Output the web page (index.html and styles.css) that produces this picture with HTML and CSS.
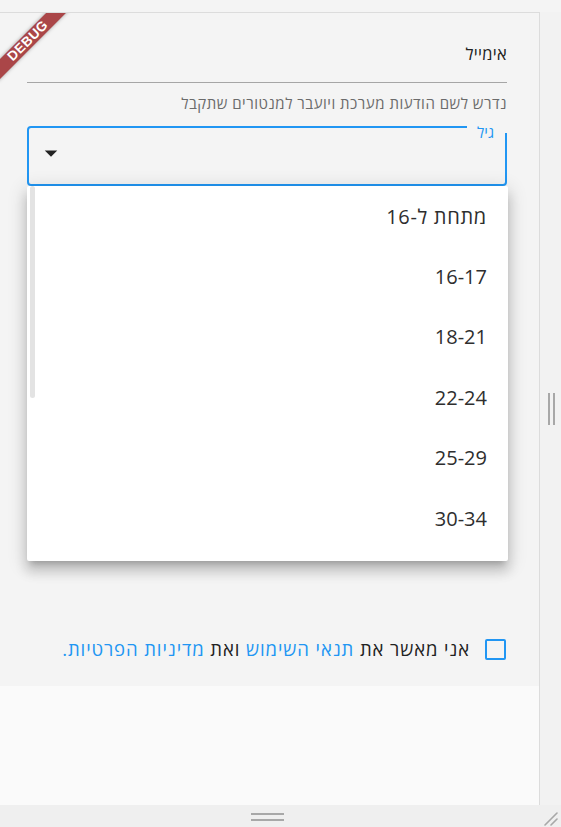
FILE: index.html
```html
<!DOCTYPE html>
<html lang="he" dir="rtl">
<head>
<meta charset="utf-8">
<title>הרשמה</title>
<link rel="stylesheet" href="styles.css">
</head>
<body>
<div class="screen">
  <div class="topbar"></div>
  <div class="main">
    <div class="panel">
      <div class="form">
        <div class="email-field">
          <div class="email-label">אימייל</div>
        </div>
        <div class="helper">נדרש לשם הודעות מערכת ויועבר למנטורים שתקבל</div>
        <div class="age-field">
          <span class="notch"></span>
          <span class="age-label">גיל</span>
          <svg class="arrow" width="30" height="30" viewBox="0 0 24 24"><path d="M7 10l5 5 5-5z" fill="#222"/></svg>
        </div>
        <div class="spacer"></div>
        <div class="consent">
          <span class="checkbox"></span>
          <span class="consent-text">אני מאשר את <span class="link">תנאי השימוש</span> ואת <span class="link">מדיניות הפרטיות.</span></span>
        </div>
      </div>
      <div class="lower"></div>

      <div class="menu">
        <div class="menu-scrollbar"></div>
        <div class="menu-item he">מתחת ל-16</div>
        <div class="menu-item">16-17</div>
        <div class="menu-item">18-21</div>
        <div class="menu-item">22-24</div>
        <div class="menu-item">25-29</div>
        <div class="menu-item">30-34</div>
      </div>

      <div class="banner-clip">
        <div class="banner">DEBUG</div>
      </div>
    </div>
    <div class="gutter">
      <div class="vhandle"></div>
    </div>
  </div>
  <div class="bottombar">
    <div class="hhandle-cell"><div class="hhandle"></div></div>
    <div class="corner">
      <svg width="16" height="16" viewBox="0 0 16 16"><path d="M15 3 L3 15 M15 9 L9 15" stroke="#a8a8a8" stroke-width="1.6" stroke-linecap="round" fill="none"/></svg>
    </div>
  </div>
</div>
</body>
</html>
```

FILE: styles.css
```css
* { box-sizing: border-box; }
html, body { margin: 0; padding: 0; }
body {
  background: #f1f1f1;
  font-family: "Open Sans", "Liberation Sans", "DejaVu Sans", sans-serif;
  color: #212121;
}
.screen {
  width: 561px;
  height: 827px;
  display: flex;
  flex-direction: column;
  overflow: hidden;
}
.topbar {
  height: 12px;
  background: #f4f4f4;
  flex: none;
}
.main {
  flex: 1;
  display: flex;
  direction: ltr;
  min-height: 0;
}
.panel {
  position: relative;
  width: 540px;
  flex: none;
  border-top: 1px solid #dcdcdc;
  border-right: 1px solid #dcdcdc;
  display: flex;
  flex-direction: column;
  direction: rtl;
}
.form {
  background: #f4f4f4;
  height: 673px;
  padding: 0 32px 0 27px;
  display: flex;
  flex-direction: column;
}
.lower {
  flex: 1;
  background: #fafafa;
}
.email-field {
  padding-top: 31px;
  padding-bottom: 18px;
  border-bottom: 1px solid #a6a6a6;
}
.email-label {
  font-size: 16.5px;
  line-height: 20px;
  letter-spacing: 0.3px;
  color: #222;
}
.helper {
  margin-top: 11px;
  font-size: 15px;
  line-height: 18px;
  letter-spacing: 0.5px;
  color: #6b6b6b;
}
.age-field {
  position: relative;
  margin-top: 14px;
  height: 60px;
  border: 2px solid #2196f3;
  border-radius: 4px;
  display: flex;
  align-items: center;
  justify-content: flex-end;
  padding: 0 0 6px 7px;
}
.notch {
  position: absolute;
  top: -3px;
  right: -3px;
  width: 41px;
  height: 8px;
  background: #f4f4f4;
}
.age-label {
  position: absolute;
  top: -4px;
  right: 11px;
  font-size: 15px;
  line-height: 16px;
  color: #2196f3;
}
.arrow { display: block; }
.spacer { flex: 1; }
.consent {
  display: flex;
  align-items: center;
  gap: 15px;
  padding-right: 1px;
  margin-bottom: 25px;
}
.checkbox {
  width: 21px;
  height: 21px;
  border: 2.5px solid #2196f3;
  border-radius: 2px;
  flex: none;
}
.consent-text {
  font-size: 18.5px;
  line-height: 24px;
  letter-spacing: 0.9px;
  color: #222;
  white-space: nowrap;
}
.link { color: #2196f3; }

.menu {
  position: absolute;
  top: 173px;
  left: 27px;
  width: 481px;
  height: 375px;
  background: #fff;
  border-radius: 2px;
  overflow: hidden;
  box-shadow: 0 6px 6px -4px rgba(0,0,0,.2), 0 10px 12px 1px rgba(0,0,0,.14), 0 4px 18px 3px rgba(0,0,0,.12);
}
.menu-scrollbar {
  position: absolute;
  left: 3px;
  top: 0;
  width: 5px;
  height: 212px;
  border-radius: 3px;
  background: #e3e3e3;
}
.menu-item {
  height: 60.4px;
  display: flex;
  align-items: center;
  padding-right: 21px;
  font-size: 20px;
  color: #2e2e2e;
}
.menu-item.he { letter-spacing: 0.7px; }

.banner-clip {
  position: absolute;
  top: 0;
  left: 0;
  width: 90px;
  height: 90px;
  overflow: hidden;
  pointer-events: none;
}
.banner {
  position: absolute;
  left: -22px;
  top: 21px;
  width: 100px;
  height: 14px;
  transform: rotate(-45deg);
  background: #aa4648;
  color: #fff;
  font-family: "Liberation Sans", sans-serif;
  font-weight: bold;
  font-size: 13.5px;
  line-height: 14px;
  text-align: center;
  letter-spacing: 0.4px;
  direction: ltr;
  box-shadow: 0 0 4px rgba(0,0,0,.35);
}

.gutter {
  flex: 1;
  background: #f2f2f2;
  display: flex;
  align-items: center;
  justify-content: center;
}
.vhandle {
  width: 7px;
  height: 32px;
  border-left: 2px solid #a8a8a8;
  border-right: 2px solid #a8a8a8;
  margin-left: 1px;
}
.bottombar {
  height: 22px;
  flex: none;
  background: #efefef;
  display: flex;
  direction: ltr;
}
.hhandle-cell {
  width: 535px;
  display: flex;
  justify-content: center;
  padding-top: 8px;
}
.hhandle {
  width: 33px;
  height: 8px;
  border-top: 2px solid #a8a8a8;
  border-bottom: 2px solid #a8a8a8;
}
.corner {
  flex: 1;
  display: flex;
  align-items: flex-end;
  justify-content: flex-end;
  padding: 0 3px 1px 0;
}
.corner svg { display: block; }
```
